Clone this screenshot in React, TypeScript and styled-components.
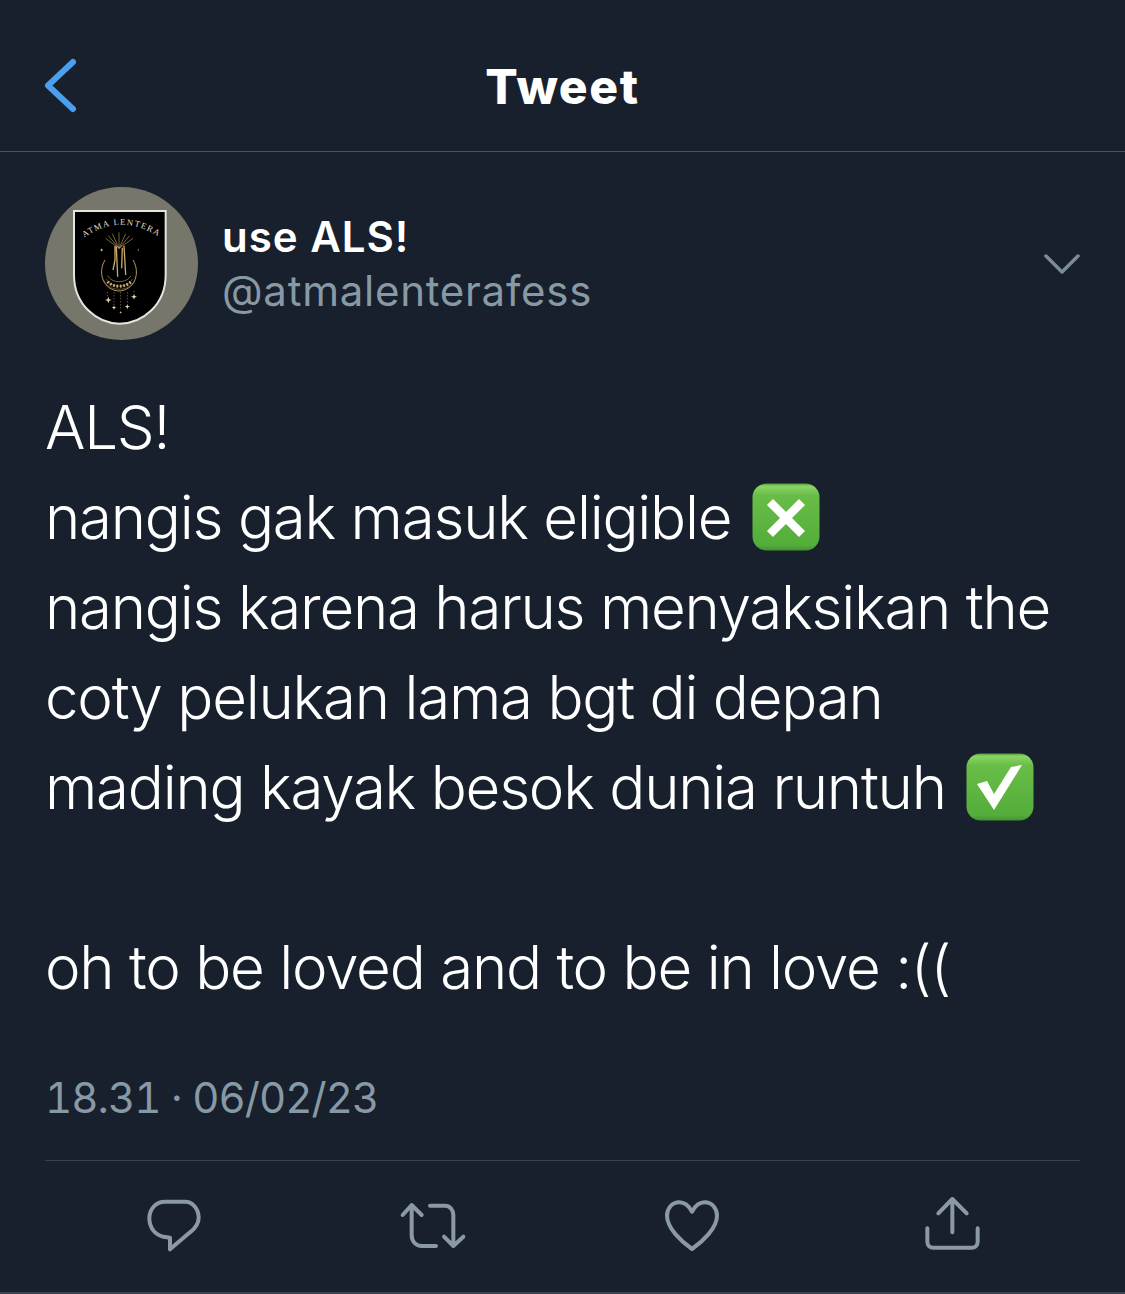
import React from "react";
import styled, { createGlobalStyle } from "styled-components";

const GlobalStyle = createGlobalStyle`
  html, body {
    margin: 0;
    padding: 0;
    background: #17202c;
  }
  body {
    font-family: "Inter", "Liberation Sans", sans-serif;
  }
`;

const ICON_GREY = "#8b99a6";

const App: React.FC = () => {
  return (
    <Page>
      <GlobalStyle />
      <Header>
        <BackButton>
          <svg width="34" height="58" viewBox="0 0 34 58" fill="none">
            <path d="M30 5 L5 28.5 L30 52" stroke="#4a9fef" strokeWidth="6" strokeLinecap="round" strokeLinejoin="round" />
          </svg>
        </BackButton>
        <Title>Tweet</Title>
      </Header>

      <Content>
        <Author>
          <Avatar>
            <Crest />
          </Avatar>
          <Names>
            <Name>use ALS!</Name>
            <Handle>@atmalenterafess</Handle>
          </Names>
          <Caret>
            <svg width="36" height="20" viewBox="0 0 36 20" fill="none">
              <path d="M2 2 L18 18 L34 2" stroke="#7c8b98" strokeWidth="3.5" strokeLinecap="round" strokeLinejoin="round" />
            </svg>
          </Caret>
        </Author>

        <Body>
          <Line>ALS!</Line>
          <Line>nangis gak masuk eligible <Emoji><CrossMark /></Emoji></Line>
          <Line>nangis karena harus menyaksikan the</Line>
          <Line>coty pelukan lama bgt di depan</Line>
          <Line>mading kayak besok dunia runtuh <Emoji><CheckMark /></Emoji></Line>
          <Line>&nbsp;</Line>
          <Line>oh to be loved and to be in love :((</Line>
        </Body>

        <Meta>18.31 · 06/02/23</Meta>

        <Actions>
          <ActionIcon>
            <ActionSvg>
              <path d="M105 50 H165 C188 50 206 72 206 98 C206 115 198 128 180 142 L120 193 V158 L100 155 C75 150 58 128 58 100 C58 72 78 50 105 50 Z" />
            </ActionSvg>
          </ActionIcon>
          <ActionIcon>
            <ActionSvg>
              <path d="M38 90 L65 60 L95 90 M65 60 V150 C65 170 78 183 95 183 H138" />
              <path d="M120 62 H165 C180 62 190 75 190 90 V183 M162 155 L190 183 L220 155" />
            </ActionSvg>
          </ActionIcon>
          <ActionIcon>
            <ActionSvg>
              <path d="M126 80 C115 60 100 52 88 52 C66 52 51 70 51 92 C51 130 95 170 126 192 C157 170 201 130 201 92 C201 70 186 52 164 52 C152 52 137 60 126 80 Z" />
            </ActionSvg>
          </ActionIcon>
          <ActionIcon>
            <ActionSvg>
              <path d="M85 85 L127 42 L170 85 M127 42 V142" />
              <path d="M52 130 V170 C52 182 60 188 70 188 H185 C195 188 203 182 203 170 V130" />
            </ActionSvg>
          </ActionIcon>
        </Actions>
      </Content>
    </Page>
  );
};

export default App;

const ActionSvg: React.FC<{ children: React.ReactNode }> = ({ children }) => (
  <svg
    width="90"
    height="80"
    viewBox="0 0 270 240"
    fill="none"
    stroke={ICON_GREY}
    strokeWidth="12"
    strokeLinecap="round"
    strokeLinejoin="round"
  >
    {children}
  </svg>
);

const GreenTile: React.FC<{ id: string; children: React.ReactNode }> = ({ id, children }) => (
  <svg width="68" height="68" viewBox="0 0 68 68">
    <defs>
      <linearGradient id={id} x1="0" y1="0" x2="0" y2="1">
        <stop offset="0" stopColor="#4f9e38" />
        <stop offset="0.04" stopColor="#8ad465" />
        <stop offset="0.18" stopColor="#68bd47" />
        <stop offset="0.92" stopColor="#54ad3a" />
        <stop offset="1" stopColor="#43912f" />
      </linearGradient>
    </defs>
    <rect x="0.5" y="0.5" width="67" height="67" rx="14" fill={`url(#${id})`} />
    {children}
  </svg>
);

const CrossMark: React.FC = () => (
  <GreenTile id="greenX">
    <path d="M18 19 L50 51 M50 19 L18 51" stroke="#fff" strokeWidth="8.5" fill="none" />
  </GreenTile>
);

const CheckMark: React.FC = () => (
  <GreenTile id="greenV">
    <path d="M11 31 L21 28 L28 41 L45 14 L56 12 L28 57 Z" fill="#fff" />
  </GreenTile>
);

const STARS: [number, number, number][] = [
  [118, 285, 10],
  [135, 308, 7],
  [175, 305, 8],
  [195, 275, 9],
  [155, 322, 4],
  [98, 135, 5],
  [208, 135, 3],
];

const Crest: React.FC = () => (
  <CrestArt width="105" height="125" viewBox="0 0 315 375">
    <path d="M15 18 H290 V210 C290 300 220 356 152 356 C85 356 15 300 15 210 Z" fill="#000" stroke="#e4e4e0" strokeWidth="6" />
    <path id="crestArc" d="M46 98 Q150 24 264 92" fill="none" />
    <text fontFamily="Liberation Serif, serif" fontSize="26" fill="#dcdcd8" letterSpacing="3.5">
      <textPath href="#crestArc" startOffset="0">ATMA LENTERA</textPath>
    </text>
    <g stroke="#b39a62" fill="none" strokeWidth="2">
      <path d="M150 130 L110 100 M150 130 L118 92 M150 130 L130 86 M150 130 L150 82 M150 130 L170 86 M150 130 L182 92 M150 130 L192 100" />
      <path d="M108 165 C84 205 104 256 150 258 C196 256 216 205 192 165" strokeWidth="3" />
      <path d="M116 212 C128 236 172 236 186 212" />
      <path d="M104 225 C118 262 182 262 198 225 M112 222 C126 250 176 250 190 222" strokeWidth="1.5" />
      <path d="M115 262 V275 M135 262 V300 M155 262 V315 M175 262 V298 M195 258 V265" strokeDasharray="3 6" strokeWidth="2.5" />
    </g>
    <path d="M116 230 C130 248 172 248 186 230" stroke="#cdb070" strokeWidth="9" strokeDasharray="5 5" fill="none" />
    <g stroke="#c9a869" fill="none" strokeWidth="4">
      <path d="M138 122 V165 L132 195 M142 125 L146 215" />
      <path d="M165 122 L170 210 M160 128 L158 190" />
    </g>
    <g fill="#f0dfae">
      {STARS.map(([x, y, r]) => (
        <path
          key={`${x}-${y}`}
          d={`M${x} ${y - r} L${x + r / 4} ${y - r / 4} L${x + r} ${y} L${x + r / 4} ${y + r / 4} L${x} ${y + r} L${x - r / 4} ${y + r / 4} L${x - r} ${y} L${x - r / 4} ${y - r / 4} Z`}
        />
      ))}
    </g>
  </CrestArt>
);

// Styled components
const Page = styled.div`
  width: 1125px;
  height: 1294px;
  overflow: hidden;
  display: flex;
  flex-direction: column;
  background: #17202c;
  color: #fff;
  border-bottom: 2px solid #3a4452;
  box-sizing: border-box;
`;

const Header = styled.header`
  height: 152px;
  flex: none;
  box-sizing: border-box;
  border-bottom: 1px solid #4a5360;
  display: flex;
  align-items: center;
  justify-content: center;
  position: relative;
  padding-top: 22px;
`;

const BackButton = styled.div`
  position: absolute;
  left: 43px;
  top: 57px;
  line-height: 0;
`;

const Title = styled.h1`
  margin: 0;
  font-size: 48px;
  font-weight: 800;
  letter-spacing: 1.6px;
  line-height: 1;
`;

const Content = styled.main`
  padding: 35px 45px 0 45px;
  display: flex;
  flex-direction: column;
`;

const Author = styled.div`
  display: flex;
  align-items: center;
  gap: 24px;
`;

const Avatar = styled.div`
  width: 153px;
  height: 153px;
  border-radius: 50%;
  background: #77766a;
  display: flex;
  align-items: center;
  justify-content: center;
  flex: none;
`;

const CrestArt = styled.svg`
  margin-top: 8px;
  flex: none;
`;

const Names = styled.div`
  display: flex;
  flex-direction: column;
  flex: 1;
`;

const Name = styled.div`
  font-size: 42px;
  font-weight: 600;
  line-height: 54px;
  letter-spacing: 1px;
`;

const Handle = styled.div`
  font-size: 42px;
  font-weight: 400;
  line-height: 54px;
  letter-spacing: 0.75px;
  color: #8899a6;
`;

const Caret = styled.div`
  line-height: 0;
`;

const Body = styled.div`
  margin-top: 42px;
  font-size: 60px;
  font-weight: 300;
  line-height: 90px;
  letter-spacing: -1.24px;
`;

const Line = styled.div`
  display: flex;
  align-items: center;
  height: 90px;
  white-space: pre;
`;

const Emoji = styled.span`
  display: inline-flex;
  margin-left: 5px;
`;

const Meta = styled.div`
  margin-top: 58px;
  font-size: 42px;
  font-weight: 400;
  line-height: 56px;
  letter-spacing: -0.95px;
  font-variant-numeric: tabular-nums;
  color: #8899a6;
`;

const Actions = styled.div`
  margin-top: 34px;
  border-top: 1px solid #38424e;
  padding-top: 24px;
  display: grid;
  grid-template-columns: repeat(4, 260px);
`;

const ActionIcon = styled.div`
  display: flex;
  justify-content: center;
  line-height: 0;
`;
